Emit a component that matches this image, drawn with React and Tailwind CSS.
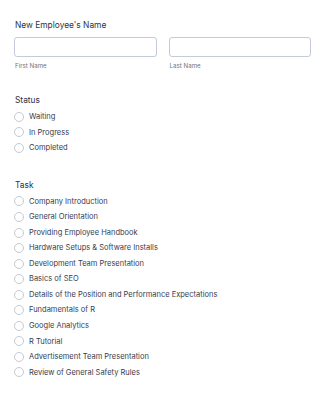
import React from "react";

const Radio = ({ label }) => (
  <div className="flex items-center h-[15.55px]">
    <span className="w-[10px] h-[10px] rounded-full border border-[#c3cad8] bg-white shrink-0 ml-[14px]" />
    <span className="ml-[5px] text-[7.5px] leading-none text-[#343c4f]">{label}</span>
  </div>
);

const status = ["Waiting", "In Progress", "Completed"];
const tasks = [
  "Company Introduction",
  "General Orientation",
  "Providing Employee Handbook",
  "Hardware Setups & Software Installs",
  "Development Team Presentation",
  "Basics of SEO",
  "Details of the Position and Performance Expectations",
  "Fundamentals of R",
  "Google Analytics",
  "R Tutorial",
  "Advertisement Team Presentation",
  "Review of General Safety Rules",
];

export default function App() {
  return (
    <div className="w-[325px] h-[400px] bg-white overflow-hidden" style={{ fontFamily: "Inter, 'Liberation Sans', sans-serif" }}>
      <div className="pt-[19px] px-[15px] text-[8.4px] leading-[12px] text-[#2c3345] font-normal">New Employee's Name</div>
      <div className="flex gap-[12px] px-[14px] mt-[6px]">
        <div className="w-[143px]">
          <div className="h-[20px] border border-[#c3cad8] rounded-[3px] bg-white" />
          <div className="mt-[5px] text-[6.2px] leading-[8px] text-[#6f7482] pl-[1px]">First Name</div>
        </div>
        <div className="w-[143px]">
          <div className="h-[20px] border border-[#c3cad8] rounded-[3px] bg-white" />
          <div className="mt-[5px] text-[6.2px] leading-[8px] text-[#6f7482] pl-[1px]">Last Name</div>
        </div>
      </div>
      <div className="mt-[24px] px-[15px] text-[8.4px] leading-[12px] text-[#2c3345] font-normal">Status</div>
      <div className="mt-[3px] flex flex-col">
        {status.map((s) => (
          <Radio key={s} label={s} />
        ))}
      </div>
      <div className="mt-[23px] px-[15px] text-[8.4px] leading-[12px] text-[#2c3345] font-normal">Task</div>
      <div className="mt-[3px] flex flex-col">
        {tasks.map((s) => (
          <Radio key={s} label={s} />
        ))}
      </div>
    </div>
  );
}
